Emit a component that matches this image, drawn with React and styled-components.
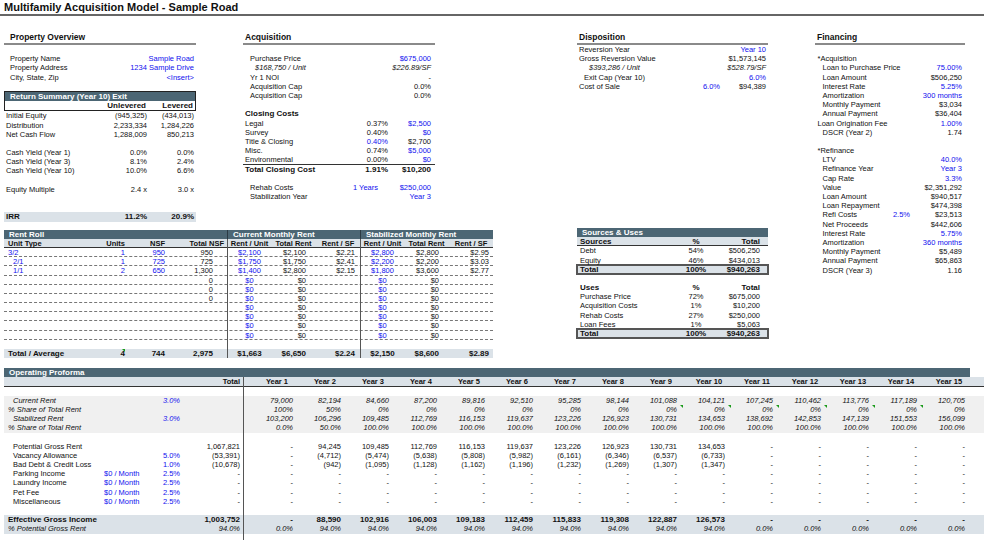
import React from 'react';
import styled, { createGlobalStyle } from 'styled-components';

const GlobalStyle = createGlobalStyle`
  body {
    margin: 0;
    background: #ffffff;
    font-family: "Liberation Sans", Arial, sans-serif;
    font-size: 7.5px;
    color: #111;
  }
`;

const Page = styled.div`
  width: 984px;
  height: 540px;
  overflow: hidden;
`;

const Title = styled.div`
  height: 14px;
  line-height: 14px;
  padding-left: 4px;
  font-size: 11px;
  font-weight: bold;
  border-bottom: 2px solid #666;
`;

const Top = styled.div`
  display: flex;
  padding-left: 4px;
  margin-top: 16px;
`;

const LeftBlock = styled.div`
  width: 489px;
  margin-right: 84px;
`;

const Pair = styled.div`
  display: flex;
  gap: 47px;
`;

const Column = styled.div`
  width: ${(p) => p.$w}px;
  flex: none;
  margin-right: ${(p) => p.$mr || 0}px;
`;

const Heading = styled.div`
  height: 11px;
  line-height: 11px;
  font-size: 8.5px;
  font-weight: bold;
  padding-left: ${(p) => p.$p || 2}px;
  border-bottom: 2px solid #8a8a8a;
`;

const Boxed = styled.div`
  border: 1px solid #222;
`;

const Bar = styled.div`
  display: grid;
  grid-template-columns: ${(p) => p.$cols || '1fr'};
  height: 9.2px;
  line-height: 9.2px;
  background: #4c6674;
  color: #fff;
  font-size: 8px;
  font-weight: bold;
  & > span {
    padding-left: 5px;
    border-left: 1px solid #2b3a44;
  }
  & > span:first-child {
    border-left: none;
  }
`;

const Grid = styled.div`
  display: grid;
  grid-template-columns: ${(p) => p.$cols};
  height: 9.2px;
  line-height: 9.2px;
  box-sizing: border-box;
  background: ${(p) => p.$bg || 'transparent'};
  font-weight: ${(p) => (p.$bold ? 'bold' : 'normal')};
  font-size: ${(p) => (p.$big ? '8px' : '7.5px')};
  border-bottom: ${(p) => (p.$dash ? '1px dashed #777' : p.$under ? '1.5px solid #333' : 'none')};
  border-top: ${(p) => (p.$top ? '1.5px solid #333' : 'none')};
  outline: ${(p) => (p.$box ? '2px solid #555' : 'none')};
  outline-offset: -1px;
`;

const Cell = styled.span`
  position: relative;
  min-width: 0;
  text-align: ${(p) => p.$a || 'left'};
  padding: 0 ${(p) => p.$p || 0}px 0 ${(p) => (p.$p || 0) + (p.$ind || 0)}px;
  white-space: nowrap;
  color: ${(p) => (p.$blue ? '#1010ee' : 'inherit')};
  font-style: ${(p) => (p.$it ? 'italic' : 'normal')};
  font-weight: ${(p) => (p.$b ? 'bold' : 'inherit')};
  font-size: ${(p) => (p.$b ? '8px' : 'inherit')};
  border-left: ${(p) => (p.$d ? '1.5px solid #555' : 'none')};
  &::after {
    content: '';
    display: ${(p) => (p.$flag ? 'block' : 'none')};
    position: absolute;
    right: 2px;
    top: 0;
    border-top: 3px solid #1a9a1a;
    border-left: 3px solid transparent;
  }
`;

const FLAGS = { '~': 'blue', _: 'it', '*': 'b', '^': 'flag' };
const parse = (v) => {
  let s = v == null ? '' : String(v);
  const f = {};
  while (s && FLAGS[s[0]]) {
    f[FLAGS[s[0]]] = true;
    s = s.slice(1);
  }
  const lead = s.length - s.trimStart().length;
  return [s.trimStart(), f, lead * 2.5];
};

const Line = ({ cols, cells = [], ...rest }) => (
  <Grid $cols={cols.map((c) => (typeof c.w === 'number' ? c.w + 'px' : c.w)).join(' ')} {...rest}>
    {cols.map((c, i) => {
      const [t, f, ind] = parse(cells[i]);
      return (
        <Cell key={i} $a={c.a} $p={c.p} $d={c.d} $ind={ind} $blue={f.blue} $it={f.it} $b={f.b} $flag={f.flag}>
          {t}
        </Cell>
      );
    })}
  </Grid>
);

const FR = 'minmax(0, 1fr)';

/* column specs */
const poCols = [{ w: FR, p: 2 }, { w: 50, a: 'right' }, { w: 49, a: 'right', p: 2 }];
const poInfoCols = [{ w: FR, p: 6 }, { w: 100, a: 'right', p: 2 }];
const acqCols = [{ w: FR, p: 2 }, { w: 50, a: 'right' }, { w: 47, a: 'right', p: 4 }];
const rehabCols = [{ w: FR, p: 2 }, { w: 50, a: 'right', p: 10 }, { w: 47, a: 'right', p: 4 }];
const dispCols = [{ w: FR, p: 2 }, { w: 50, a: 'right' }, { w: 48, a: 'right', p: 2 }];
const finCols = [{ w: FR, p: 0 }, { w: 40, a: 'right' }, { w: 55, a: 'right', p: 3 }];
const suCols = [{ w: FR, p: 3 }, { w: 34, a: 'center' }, { w: 55, a: 'right', p: 8 }];
const rrCols = [
  { w: 96, p: 4 }, { w: 27, a: 'right', p: 2 }, { w: 40, a: 'right', p: 2 }, { w: 60, a: 'right', p: 14 },
  { w: 44, a: 'center', d: true }, { w: 45, a: 'right', p: 10 }, { w: 44, a: 'right', p: 5 },
  { w: 44, a: 'center', d: true }, { w: 45, a: 'right', p: 10 }, { w: 44, a: 'right', p: 4 },
];
const rrHeadCols = rrCols.map((c, i) =>
  i === 0 ? c : i < 4 ? { ...c, a: 'right', p: i === 3 ? 3 : 2 } : { ...c, a: 'center', p: 0 }
);
const pfCols = [
  { w: 100, p: 4 }, { w: 46 }, { w: 32, a: 'right', p: 2 }, { w: 61, a: 'right', p: 3 }, { w: 10, d: true },
  ...Array.from({ length: 15 }, () => ({ w: 48, a: 'right', p: 8 })),
];
const pfHeadCols = pfCols.map((c, i) => (i > 4 ? { ...c, a: 'center', p: 0 } : c));

const financing = [
  [],
  [' *Acquisition'],
  ['   Loan to Purchase Price', '', '~75.00%'],
  ['   Loan Amount', '', '$506,250'],
  ['   Interest Rate', '', '~5.25%'],
  ['   Amortization', '', '~300 months'],
  ['   Monthly Payment', '', '$3,034'],
  ['   Annual Payment', '', '$36,404'],
  [' Loan Origination Fee', '', '~1.00%'],
  ['   DSCR (Year 2)', '', '1.74'],
  [],
  [' *Refinance'],
  ['   LTV', '', '~40.0%'],
  ['   Refinance Year', '', '~Year 3'],
  ['   Cap Rate', '', '~3.3%'],
  ['   Value', '', '$2,351,292'],
  ['   Loan Amount', '', '$940,517'],
  ['   Loan Repayment', '', '$474,398'],
  ['   Refi Costs', '~2.5%', '$23,513'],
  ['   Net Proceeds', '', '$442,606'],
  ['   Interest Rate', '', '~5.75%'],
  ['   Amortization', '', '~360 months'],
  ['   Monthly Payment', '', '$5,489'],
  ['   Annual Payment', '', '$65,863'],
  ['   DSCR (Year 3)', '', '1.16'],
];

const rentRows = [
  ['~3/2', '~1', '~950', '950', '~$2,100', '$2,100', '$2.21', '~$2,800', '$2,800', '$2.95'],
  ['~  2/1', '~1', '~725', '725', '~$1,750', '$1,750', '$2.41', '~$2,200', '$2,200', '$3.03'],
  ['~  1/1', '~2', '~650', '1,300', '~$1,400', '$2,800', '$2.15', '~$1,800', '$3,600', '$2.77'],
  ['', '', '', '0', '~$0', '$0', '', '~$0', '$0', ''],
  ['', '', '', '0', '~$0', '$0', '', '~$0', '$0', ''],
  ['', '', '', '0', '~$0', '$0', '', '~$0', '$0', ''],
  ['', '', '', '', '~$0', '$0', '', '~$0', '$0', ''],
  ['', '', '', '', '~$0', '$0', '', '~$0', '$0', ''],
  ['', '', '', '', '~$0', '$0', '', '~$0', '$0', ''],
  ['', '', '', '', '~$0', '$0', '', '~$0', '$0', ''],
];

const it = (arr) => arr.map((v) => '_' + v);
const dash = Array(15).fill('-');
const dash5 = Array(5).fill('-');

const pfGray = [
  ['_  Current Rent', '', '~_3.0%', '', '', ...it(['79,000', '82,194', '84,660', '87,200', '89,816', '92,510', '95,285', '98,144', '101,088', '104,121', '107,245', '110,462', '113,776', '117,189', '120,705'])],
  ['_% Share of Total Rent', '', '', '', '', ...it(['100%', '50%', '0%', '0%', '0%', '0%', '0%', '0%']), ...['^_0%', '^_0%', '^_0%', '^_0%', '^_0%', '^_0%', '_0%']],
  ['_  Stabilized Rent', '', '~_3.0%', '', '', ...it(['103,200', '106,296', '109,485', '112,769', '116,153', '119,637', '123,226', '126,923', '130,731', '134,653', '138,692', '142,853', '147,139', '151,553', '156,099'])],
  ['_% Share of Total Rent', '', '', '', '', ...it(['0.0%', '50.0%', ...Array(13).fill('100.0%')])],
];
const pfIncome = [
  ['  Potential Gross Rent', '', '', '1,067,821', '', '-', '94,245', '109,485', '112,769', '116,153', '119,637', '123,226', '126,923', '130,731', '134,653', ...dash5],
  ['  Vacancy Allowance', '', '~5.0%', '(53,391)', '', '-', '(4,712)', '(5,474)', '(5,638)', '(5,808)', '(5,982)', '(6,161)', '(6,346)', '(6,537)', '(6,733)', ...dash5],
  ['  Bad Debt & Credit Loss', '', '~1.0%', '(10,678)', '', '-', '(942)', '(1,095)', '(1,128)', '(1,162)', '(1,196)', '(1,232)', '(1,269)', '(1,307)', '(1,347)', ...dash5],
  ['  Parking Income', '~$0 / Month', '~2.5%', '-', '', ...dash],
  ['  Laundry Income', '~$0 / Month', '~2.5%', '-', '', ...dash],
  ['  Pet Fee', '~$0 / Month', '~2.5%', '-', '', ...dash],
  ['  Miscellaneous', '~$0 / Month', '~2.5%', '-', '', ...dash],
];

const Section = styled.div`
  margin-top: ${(p) => p.$mt || 0}px;
`;

const Pf = styled.div`
  padding-left: 4px;
`;

const PfBar = styled(Bar)`
  width: 966px;
  margin-left: 4px;
`;

export default function App() {
  return (
    <Page>
      <GlobalStyle />
      <Title>Multifamily Acquisition Model - Sample Road</Title>
      <Top>
        <LeftBlock>
          <Pair>
            <Column $w={192}>
              <Heading $p={6}>Property Overview</Heading>
              <Line cols={poCols} />
              <Line cols={poInfoCols} cells={['Property Name', '~Sample Road']} />
              <Line cols={poInfoCols} cells={['Property Address', '~1234 Sample Drive']} />
              <Line cols={poInfoCols} cells={['City, State, Zip', '~<Insert>']} />
              <Line cols={poCols} />
              <Boxed>
                <Bar>
                  <span>Return Summary (Year 10) Exit</span>
                </Bar>
                <Line cols={poCols} $bold $big cells={['', 'Unlevered', 'Levered']} />
              </Boxed>
              <Line cols={poCols} cells={['Initial Equity', '(945,325)', '(434,013)']} />
              <Line cols={poCols} cells={['Distribution', '2,233,334', '1,284,226']} />
              <Line cols={poCols} cells={['Net Cash Flow', '1,288,009', '850,213']} />
              <Line cols={poCols} />
              <Line cols={poCols} cells={['Cash Yield (Year 1)', '0.0%', '0.0%']} />
              <Line cols={poCols} cells={['Cash Yield (Year 3)', '8.1%', '2.4%']} />
              <Line cols={poCols} cells={['Cash Yield (Year 10)', '10.0%', '6.6%']} />
              <Line cols={poCols} />
              <Line cols={poCols} cells={['Equity Multiple', '2.4 x', '3.0 x']} />
              <Line cols={poCols} />
              <Line cols={poCols} />
              <Line cols={poCols} $bold $big $bg="#dbe2e8" cells={['IRR', '11.2%', '20.9%']} />
            </Column>
            <Column $w={192}>
              <Heading>Acquisition</Heading>
              <Line cols={acqCols} />
              <Line cols={acqCols} cells={['  Purchase Price', '', '~$675,000']} />
              <Line cols={acqCols} cells={['_    $168,750 / Unit', '', '_$226.89/SF']} />
              <Line cols={acqCols} cells={['  Yr 1 NOI', '', '-']} />
              <Line cols={acqCols} cells={['  Acquisition Cap', '', '0.0%']} />
              <Line cols={acqCols} cells={['  Acquisition Cap', '', '0.0%']} />
              <Line cols={acqCols} />
              <Line cols={acqCols} cells={['*Closing Costs']} />
              <Line cols={acqCols} cells={['Legal', '0.37%', '~$2,500']} />
              <Line cols={acqCols} cells={['Survey', '0.40%', '~$0']} />
              <Line cols={acqCols} cells={['Title & Closing', '~0.40%', '$2,700']} />
              <Line cols={acqCols} cells={['Misc.', '0.74%', '~$5,000']} />
              <Line cols={acqCols} cells={['Environmental', '0.00%', '~$0']} />
              <Line cols={acqCols} $top $bold $big cells={['Total Closing Cost', '1.91%', '$10,200']} />
              <Line cols={acqCols} />
              <Line cols={rehabCols} cells={['  Rehab Costs', '~1 Years', '~$250,000']} />
              <Line cols={acqCols} cells={['  Stabilization Year', '', '~Year 3']} />
            </Column>
          </Pair>
          <Section $mt={8}>
            <Bar $cols="223px 133px 133px">
              <span>Rent Roll</span>
              <span>Current Monthly Rent</span>
              <span>Stabilized Monthly Rent</span>
            </Bar>
            <Line
              cols={rrHeadCols}
              $bold
              $under
              $bg="#dbe2e8"
              cells={['Unit Type', 'Units', 'NSF', 'Total NSF', 'Rent / Unit', 'Total Rent', 'Rent / SF', 'Rent / Unit', 'Total Rent', 'Rent / SF']}
            />
            {rentRows.map((r, i) => (
              <Line key={i} cols={rrCols} $dash cells={r} />
            ))}
            <Line cols={rrCols} />
            <Line
              cols={rrCols}
              $bold
              $big
              $bg="#dbe2e8"
              cells={['Total / Average', '^4', '744', '2,975', '$1,663', '$6,650', '$2.24', '$2,150', '$8,600', '$2.89']}
            />
          </Section>
        </LeftBlock>

        <Column $w={191} $mr={47}>
          <Heading>Disposition</Heading>
          <Line cols={dispCols} cells={['Reversion Year', '', '~Year 10']} />
          <Line cols={dispCols} cells={['Gross Reversion Value', '', '$1,573,145']} />
          <Line cols={dispCols} cells={['_    $393,286 / Unit', '', '_$528.79/SF']} />
          <Line cols={dispCols} cells={['  Exit Cap (Year 10)', '', '~6.0%']} />
          <Line cols={dispCols} cells={['Cost of Sale', '~6.0%', '$94,389']} />
          <Section $mt={137}>
            <Bar>
              <span>Sources &amp; Uses</span>
            </Bar>
            <Line cols={suCols} $bold $big $under $bg="#dbe2e8" cells={['Sources', '%', 'Total']} />
            <Line cols={suCols} cells={['Debt', '54%', '$506,250']} />
            <Line cols={suCols} cells={['Equity', '46%', '$434,013']} />
            <Line cols={suCols} $bold $big $box $bg="#dbe2e8" cells={['Total', '100%', '$940,263']} />
            <Line cols={suCols} />
            <Line cols={suCols} $bold $big cells={['Uses', '%', 'Total']} />
            <Line cols={suCols} cells={['Purchase Price', '72%', '$675,000']} />
            <Line cols={suCols} cells={['Acquisition Costs', '1%', '$10,200']} />
            <Line cols={suCols} cells={['Rehab Costs', '27%', '$250,000']} />
            <Line cols={suCols} cells={['Loan Fees', '1%', '$5,063']} />
            <Line cols={suCols} $bold $big $box $bg="#dbe2e8" cells={['Total', '100%', '$940,263']} />
          </Section>
        </Column>

        <Column $w={150}>
          <Heading>Financing</Heading>
          {financing.map((r, i) => (
            <Line key={i} cols={finCols} cells={r} />
          ))}
        </Column>
      </Top>

      <Section $mt={10}>
        <PfBar>
          <span>Operating Proforma</span>
        </PfBar>
        <Pf>
          <Line
            cols={pfHeadCols}
            $bold
            $under
            $bg="#dbe2e8"
            cells={['', '', '', 'Total', '', ...Array.from({ length: 15 }, (_, i) => `Year ${i + 1}`)]}
          />
          <Line cols={pfCols} />
          {pfGray.map((r, i) => (
            <Line key={'g' + i} cols={pfCols} $bg="#f0f0f0" cells={r} />
          ))}
          <Line cols={pfCols} />
          {pfIncome.map((r, i) => (
            <Line key={'i' + i} cols={pfCols} cells={r} />
          ))}
          <Line cols={pfCols} />
          <Line
            cols={pfCols}
            $bold
            $big
            $bg="#dbe2e8"
            cells={['Effective Gross Income', '', '', '1,003,752', '', '-', '88,590', '102,916', '106,003', '109,183', '112,459', '115,833', '119,308', '122,887', '126,573', '-', '-', '-', '-', '-']}
          />
          <Line
            cols={pfCols}
            $bg="#dbe2e8"
            cells={['_% Potential Gross Rent', '', '', '_94.0%', '', ...it(['0.0%', ...Array(9).fill('94.0%'), ...Array(5).fill('0.0%')])]}
          />
          <Line cols={pfCols} />
        </Pf>
      </Section>
    </Page>
  );
}
